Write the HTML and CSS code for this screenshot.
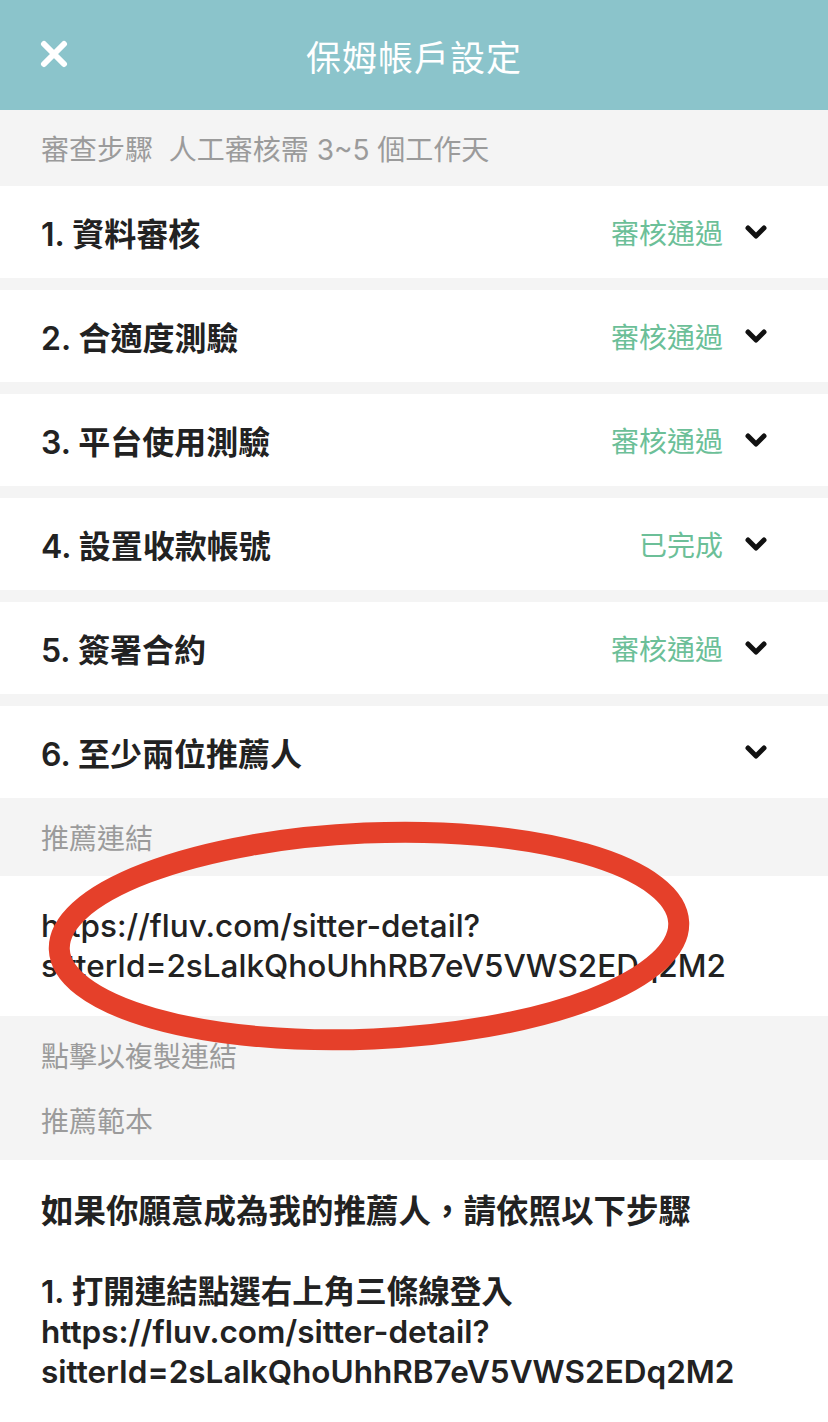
FILE: index.html
```html
<!DOCTYPE html>
<html lang="zh-Hant">
<head>
    <meta charset="UTF-8">
    <meta name="viewport" content="width=device-width, initial-scale=1.0">
    <title>保姆帳戶設定</title>
    <link rel="stylesheet" href="styles.css">
</head>
<body>

    <div class="page">
        <div class="topbar">
            <svg class="close-icon" viewBox="0 0 28 28" width="28" height="28">
                <path d="M4 4 L24 24 M24 4 L4 24" stroke="#fff" stroke-width="6" stroke-linecap="round"/>
            </svg>
            <h1>保姆帳戶設定</h1>
        </div>

        <div class="section-label">審查步驟&nbsp;&nbsp;人工審核需 3~5 個工作天</div>

        <div class="steps">
            <div class="step">
                <span class="step-title">1. 資料審核</span>
                <span class="step-status">審核通過</span>
                <svg class="chevron" viewBox="0 0 22 14" width="22" height="14"><path d="M3 3 L11 11 L19 3" fill="none" stroke="#111" stroke-width="5" stroke-linecap="round" stroke-linejoin="round"/></svg>
            </div>
            <div class="step">
                <span class="step-title">2. 合適度測驗</span>
                <span class="step-status">審核通過</span>
                <svg class="chevron" viewBox="0 0 22 14" width="22" height="14"><path d="M3 3 L11 11 L19 3" fill="none" stroke="#111" stroke-width="5" stroke-linecap="round" stroke-linejoin="round"/></svg>
            </div>
            <div class="step">
                <span class="step-title">3. 平台使用測驗</span>
                <span class="step-status">審核通過</span>
                <svg class="chevron" viewBox="0 0 22 14" width="22" height="14"><path d="M3 3 L11 11 L19 3" fill="none" stroke="#111" stroke-width="5" stroke-linecap="round" stroke-linejoin="round"/></svg>
            </div>
            <div class="step">
                <span class="step-title">4. 設置收款帳號</span>
                <span class="step-status">已完成</span>
                <svg class="chevron" viewBox="0 0 22 14" width="22" height="14"><path d="M3 3 L11 11 L19 3" fill="none" stroke="#111" stroke-width="5" stroke-linecap="round" stroke-linejoin="round"/></svg>
            </div>
            <div class="step">
                <span class="step-title">5. 簽署合約</span>
                <span class="step-status">審核通過</span>
                <svg class="chevron" viewBox="0 0 22 14" width="22" height="14"><path d="M3 3 L11 11 L19 3" fill="none" stroke="#111" stroke-width="5" stroke-linecap="round" stroke-linejoin="round"/></svg>
            </div>
            <div class="step">
                <span class="step-title">6. 至少兩位推薦人</span>
                <span class="step-status"></span>
                <svg class="chevron" viewBox="0 0 22 14" width="22" height="14"><path d="M3 3 L11 11 L19 3" fill="none" stroke="#111" stroke-width="5" stroke-linecap="round" stroke-linejoin="round"/></svg>
            </div>
        </div>

        <div class="section-label link-label">推薦連結</div>
        <div class="link-box">https://fluv.com/sitter-detail?<br>sitterId=2sLalkQhoUhhRB7eV5VWS2EDq2M2</div>

        <div class="section-label hint">點擊以複製連結</div>
        <div class="section-label sample">推薦範本</div>

        <div class="template">
            <p class="lead">如果你願意成為我的推薦人，請依照以下步驟</p>
            <p>&nbsp;</p>
            <p>1. 打開連結點選右上角三條線登入<br>https://fluv.com/sitter-detail?<br>sitterId=2sLalkQhoUhhRB7eV5VWS2EDq2M2</p>
        </div>

        <!-- red marker drawn over the link -->
        <svg class="marker" viewBox="0 0 828 1422" width="828" height="1422">
            <ellipse cx="369" cy="936" rx="310" ry="103" fill="none" stroke="#e5402a" stroke-width="21" transform="rotate(-2.5 369 936)"/>
        </svg>
    </div>

</body>
</html>
```

FILE: styles.css
```css
body {
    margin: 0;
    padding: 0;
    background-color: #f4f4f4;
    font-family: Inter, "Noto Sans CJK TC", sans-serif;
}
.page {
    position: relative;
    width: 828px;
    min-height: 1422px;
    overflow: hidden;
}
.topbar {
    height: 110px;
    background: #8bc4cb;
    display: flex;
    align-items: center;
    justify-content: center;
    position: relative;
}
.close-icon {
    position: absolute;
    left: 40px;
    top: 40px;
}
.topbar h1 {
    margin: 0;
    color: #fff;
    font-size: 35px;
    font-weight: normal;
    letter-spacing: 1px;
}
.section-label {
    height: 76px;
    display: flex;
    align-items: center;
    padding-left: 41px;
    color: #9b9b9b;
    font-size: 28px;
}
.section-label.link-label {
    height: 78px;
}
.section-label.hint {
    height: 78px;
    align-items: flex-start;
    padding-top: 19px;
    box-sizing: border-box;
}
.section-label.sample {
    height: 66px;
    align-items: flex-start;
    padding-top: 6px;
    box-sizing: border-box;
}
.steps {
    display: flex;
    flex-direction: column;
    gap: 12px;
}
.step {
    height: 92px;
    background: #fff;
    display: flex;
    align-items: center;
    padding: 0 61px 0 41px;
}
.step-title {
    flex: 1;
    font-size: 32px;
    font-weight: 600;
    color: #222;
}
.step-status {
    color: #6cbf98;
    font-size: 28px;
    margin-right: 22px;
}
.chevron {
    display: block;
}
.link-box {
    background: #fff;
    padding: 30px 41px;
    font-size: 31.5px;
    font-weight: 500;
    line-height: 40px;
    color: #222;
}
.template {
    background: #fff;
    padding: 32px 41px 40px;
    font-size: 31.5px;
    line-height: 40px;
    font-weight: 600;
    color: #222;
}
.template p {
    margin: 0;
}
.template .lead {
    font-size: 32.5px;
}
.marker {
    position: absolute;
    left: 0;
    top: 0;
    pointer-events: none;
}
```
